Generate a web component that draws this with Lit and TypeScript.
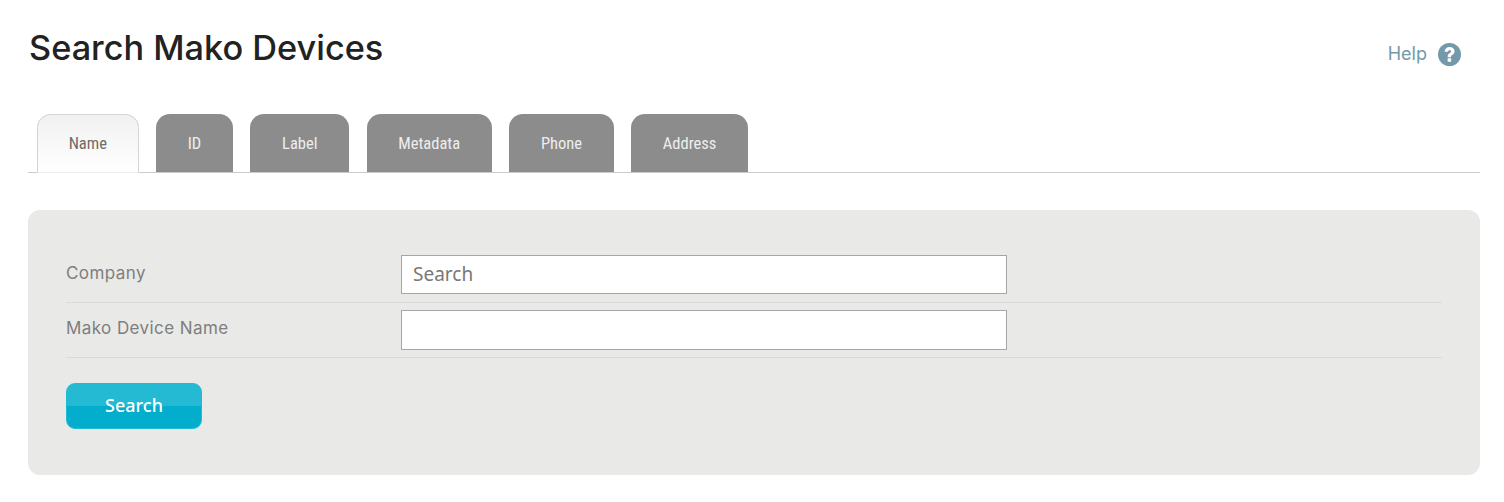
import { LitElement, html, css } from "lit";
import { customElement } from "lit/decorators.js";

@customElement("app-root")
export class AppRoot extends LitElement {
  static styles = css`
    :host { display: block; padding: 0 24px 0 28px; font-family: Inter, sans-serif; background: #fff; height: 502px; box-sizing: border-box; }
    .head { display: flex; justify-content: space-between; height: 114px; }
    h1 { margin: 0; padding-top: 25px; font: 500 34.3px/46px Inter, sans-serif; color: #222; letter-spacing: 0; padding-left: 1px; }
    .help { display: flex; align-items: center; gap: 11px; height: 28px; margin: 40px 19px 0 0; color: #7399aa; font: 400 18px/28px Inter, sans-serif; }
    .help svg { width: 23px; height: 23px; display: block; }
    .tabs { display: flex; gap: 17.5px; padding-left: 9px; height: 58px; border-bottom: 1px solid #ccc; }
    .tab { box-sizing: border-box; height: 58px; padding: 1px 31.65px 0; border-radius: 14px 14px 0 0; background: #8c8c8c; color: #eee; font: 450 16.5px/58px Roboto, sans-serif; font-stretch: 75%; }
    .tab.active { background: linear-gradient(#f1f1f1, #fff); border: 1px solid #d5d5d5; border-bottom: 1px solid #eee; color: #6f6a66; line-height: 57px; height: 59px; padding: 0 30.65px; }
    .panel { margin-top: 37px; height: 265px; box-sizing: border-box; padding: 37px 38px 0; background: #e9e9e7; border-radius: 12px; }
    .row { display: flex; align-items: flex-start; height: 55px; box-sizing: border-box; border-bottom: 1px solid #d9d9d7; padding-top: 7px; }
    .row.first { height: 56px; padding-top: 8px; }
    label { width: 335px; font: 400 17px/22px Inter, sans-serif; color: #7e7e7e; letter-spacing: 0.42px; padding-top: 7px; }
    input { box-sizing: border-box; width: 606px; height: 39px; border: 1px solid #a6a6a6; background: #fff; padding: 0 11px 2px; font: 400 19px "Noto Sans", sans-serif; color: #555; outline: none; border-radius: 0; }
    input::placeholder { color: #777; opacity: 1; }
    .row.tall input { height: 40px; }
    button { display: block; margin-top: 25px; width: 136px; height: 46px; border: 1px solid #20bcd4; border-radius: 9px; background: linear-gradient(#25bad3 50%, #03aecd 50%); color: #fff; font: 500 18px "Noto Sans", sans-serif; padding: 0 0 2px; }
  `;

  render() {
    const tabs = ["Name", "ID", "Label", "Metadata", "Phone", "Address"];
    return html`
      <div class="head">
        <h1>Search Mako Devices</h1>
        <div class="help">Help
          <svg viewBox="0 0 24 24"><circle cx="12" cy="12" r="12" fill="#7399aa"/><path d="M6.8 9.2C7 6 9.200 4.300 12.100 4.300c3 0 5.200 1.800 5.200 4.400 0 1.900-1 2.900-2.400 3.800-1 .6-1.300 1-1.300 1.900v.5h-3.500v-.9c0-1.700.7-2.600 1.900-3.400 1.100-.7 1.700-1.100 1.700-1.800 0-.8-.7-1.300-1.600-1.300-1.100 0-1.700.7-1.800 1.700z M10.100 16h3.600v3.600h-3.600z" fill="#fff"/></svg>
        </div>
      </div>
      <div class="tabs">
        ${tabs.map((t, i) => html`<div class="tab ${i === 0 ? "active" : ""}">${t}</div>`)}
      </div>
      <div class="panel">
        <div class="row first"><label>Company</label><input placeholder="Search" /></div>
        <div class="row tall"><label>Mako Device Name</label><input /></div>
        <button>Search</button>
      </div>
    `;
  }
}
